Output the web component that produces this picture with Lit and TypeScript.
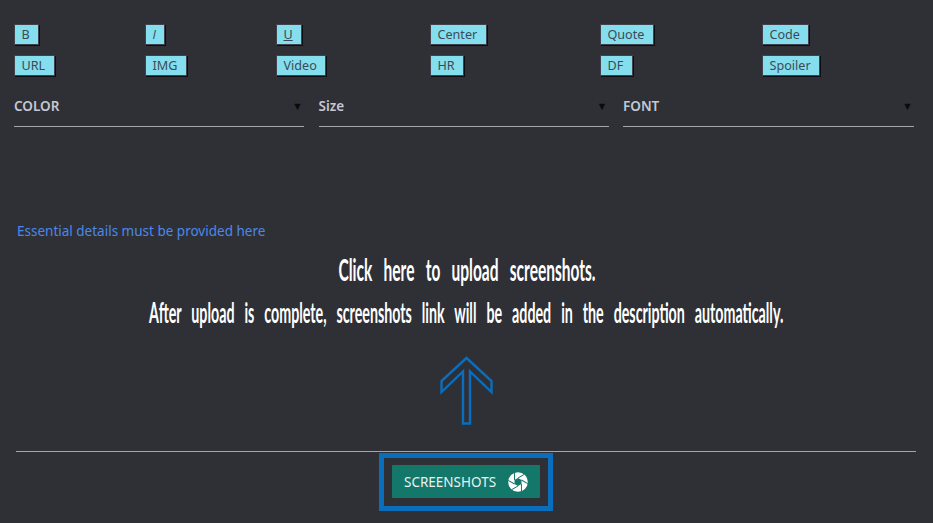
import { LitElement, html, css, svg } from "lit";
import { customElement } from "lit/decorators.js";

const ROWS = [
  ["B", "I", "U", "Center", "Quote", "Code"],
  ["URL", "IMG", "Video", "HR", "DF", "Spoiler"],
];

@customElement("app-root")
export class AppRoot extends LitElement {
  static styles = css`
    :host {
      display: block;
      width: 933px;
      height: 523px;
      overflow: hidden;
      background: #2f3036;
      font-family: "Noto Sans", "Open Sans", sans-serif;
      color: #c9ccd4;
    }
    .page { display: flex; flex-direction: column; padding: 24px 14px 0; }
    .toolbar {
      display: grid;
      grid-template-columns: 131px 131px 154px 170px 162px 1fr;
      row-gap: 10px;
    }
    .btn {
      justify-self: start;
      height: 19px;
      line-height: 19px;
      padding: 0 8.5px 0 6.5px;
      font-size: 12.6px;
      background: #84deee;
      color: #3d4a55;
      border: 1px solid #40424e;
      box-shadow: 1px 1px 0 #0d0d10;
    }
    .i { font-style: italic; font-family: "Open Sans", sans-serif; }
    .u { text-decoration: underline; }
    .selects {
      display: grid;
      grid-template-columns: 290px 290px 291px;
      column-gap: 14.5px;
      margin-top: 19px;
    }
    .select {
      height: 31px;
      line-height: 22px;
      display: flex;
      align-items: flex-start;
      justify-content: space-between;
      border-bottom: 1px solid #a5a6a8;
      font-size: 13.5px;
      font-weight: 600;
      color: #c4c8d2;
      padding-right: 1px;
    }
    .caret { font-size: 11px; color: #0b0b0d; }
    .note {
      margin: 95px 0 0 3px;
      font-size: 13.5px;
      line-height: 18px;
      color: #4a89ea;
    }
    .line {
      display: flex;
      justify-content: center;
      color: #fff;
      font-family: "Lato", sans-serif;
      font-weight: 700;
      white-space: nowrap;
      line-height: 34px;
    }
    .line span { display: inline-block; flex: none; transform: scaleX(0.5); }
    .l1 { font-size: 31px; margin-top: 12px; word-spacing: 15px; }
    .l2 { font-size: 28.5px; margin-top: 9px; word-spacing: 13px; }
    .arrow { align-self: center; display: block; margin-top: 27px; }
    .rule {
      margin: 25px 3px 0 2px;
      border-top: 1px solid #a5a6a8;
    }
    .uploadbox {
      align-self: center;
      margin: 1px 1px 0 0;
      border: 5px solid #0a6ebd;
      padding: 7px 8px 8px;
      display: flex;
    }
    .upload {
      width: 148px;
      height: 33px;
      box-sizing: border-box;
      background: #13776a;
      border-radius: 1px;
      color: #eaf3f0;
      font-size: 13.5px;
      display: flex;
      align-items: center;
      gap: 12px;
      padding-left: 12px;
    }
  `;

  render() {
    return html`
      <div class="page">
        <div class="toolbar">
          ${ROWS.flat().map(
            (t) => html`<div class="btn ${t === "I" ? "i" : ""} ${t === "U" ? "u" : ""}">${t}</div>`
          )}
        </div>
        <div class="selects">
          ${["COLOR", "Size", "FONT"].map(
            (t) => html`<div class="select"><span>${t}</span><span class="caret">▼</span></div>`
          )}
        </div>
        <div class="note">Essential details must be provided here</div>
        <div class="line l1"><span>Click here to upload screenshots.</span></div>
        <div class="line l2"><span>After upload is complete, screenshots link will be added in the description automatically.</span></div>
        <svg class="arrow" width="54" height="70" viewBox="0 0 54 70" fill="none" stroke="#0a6ebd" stroke-width="2.4">
          <path d="M26.5 2 L51.5 25 V36 L30 15.5 V67.5 H23 V15.5 L1.5 36 V25 Z" />
        </svg>
        <div class="rule"></div>
        <div class="uploadbox">
          <div class="upload">
            <span>SCREENSHOTS</span>
            <svg width="20" height="20" viewBox="0 0 20 20">
              <circle cx="10" cy="10" r="9.8" fill="#fff" />
              <path d="M10 6 L13.46 8 V12 L10 14 L6.54 12 V8 Z" fill="#13776a" />
              <g stroke="#13776a" stroke-width="1">
                ${[0, 60, 120, 180, 240, 300].map(
                  (a) => svg`<path transform="rotate(${a} 10 10)" d="M10 6 L16.39 2.31" />`
                )}
              </g>
            </svg>
          </div>
        </div>
      </div>
    `;
  }
}
